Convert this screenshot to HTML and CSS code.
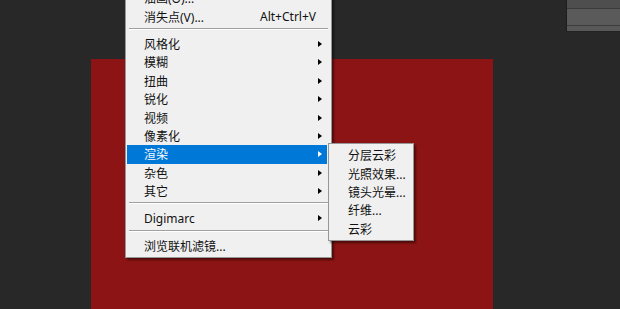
FILE: index.html
```html
<!DOCTYPE html>
<html lang="zh-CN">
<head>
  <meta charset="UTF-8" />
  <title>滤镜菜单</title>
  <link rel="stylesheet" href="styles.css">
</head>
<body>
  <div class="workspace">
    <div class="canvas"></div>

    <div class="panel">
      <div class="panel-top"></div>
      <div class="panel-bar"></div>
      <div class="panel-strip"></div>
    </div>

    <div class="menu main-menu">
      <div class="item"><span class="label">油画(O)...</span></div>
      <div class="item"><span class="label">消失点(V)...</span><span class="shortcut">Alt+Ctrl+V</span></div>
      <div class="sep"></div>
      <div class="item"><span class="label">风格化</span><span class="arrow"></span></div>
      <div class="item"><span class="label">模糊</span><span class="arrow"></span></div>
      <div class="item"><span class="label">扭曲</span><span class="arrow"></span></div>
      <div class="item"><span class="label">锐化</span><span class="arrow"></span></div>
      <div class="item"><span class="label">视频</span><span class="arrow"></span></div>
      <div class="item"><span class="label">像素化</span><span class="arrow"></span></div>
      <div class="item active"><span class="label">渲染</span><span class="arrow"></span></div>
      <div class="item"><span class="label">杂色</span><span class="arrow"></span></div>
      <div class="item"><span class="label">其它</span><span class="arrow"></span></div>
      <div class="sep"></div>
      <div class="item"><span class="label">Digimarc</span><span class="arrow"></span></div>
      <div class="sep"></div>
      <div class="item"><span class="label">浏览联机滤镜...</span></div>
    </div>

    <div class="menu sub-menu">
      <div class="item"><span class="label">分层云彩</span></div>
      <div class="item"><span class="label">光照效果...</span></div>
      <div class="item"><span class="label">镜头光晕...</span></div>
      <div class="item"><span class="label">纤维...</span></div>
      <div class="item"><span class="label">云彩</span></div>
    </div>
  </div>
</body>
</html>
```

FILE: styles.css
```css
body {
  margin: 0;
  background: #282828;
  font-family: "Noto Sans", "Noto Sans CJK SC", sans-serif;
  font-size: 12px;
  color: #111;
  overflow: hidden;
}
.workspace {
  position: relative;
  width: 620px;
  height: 309px;
  overflow: hidden;
}
.canvas {
  position: absolute;
  left: 91px;
  top: 59px;
  width: 402px;
  height: 260px;
  background: #8c1414;
}
.panel {
  position: absolute;
  left: 566px;
  top: 0;
  width: 60px;
  border-left: 1px solid #1e1e1e;
  border-bottom: 1px solid #222;
}
.panel-top {
  height: 8px;
  background: #4e4e4e;
  border-bottom: 1px solid #3a3a3a;
}
.panel-bar {
  height: 16px;
  background: #5a5a5a;
  border-bottom: 1px solid #3d3d3d;
}
.panel-strip {
  height: 5px;
  background: #585858;
}
.menu {
  position: absolute;
  background: #f0f0f0;
  border: 1px solid #979797;
  box-shadow: 2px 2px 2px rgba(0,0,0,0.45);
  padding: 2px 1px;
}
.main-menu {
  left: 125px;
  top: -14px;
  width: 203px;
}
.sub-menu {
  left: 328px;
  top: 143px;
  width: 82px;
}
.item {
  height: 18.4px;
  display: flex;
  align-items: center;
  padding-left: 17px;
  padding-right: 8px;
  white-space: nowrap;
}
.sub-menu .item {
  padding-left: 18px;
}
.item .label {
  flex: 1;
}
.shortcut {
  margin-right: 6px;
}
.arrow {
  width: 0;
  height: 0;
  border-top: 3.5px solid transparent;
  border-bottom: 3.5px solid transparent;
  border-left: 4px solid #000;
}
.item.active {
  background: #0078d7;
  color: #fff;
  margin-right: 3px;
  padding-right: 5px;
}
.item.active .arrow {
  border-left-color: #fff;
}
.sep {
  height: 1px;
  margin: 2px 2px 5px 2px;
  background: #a0a0a0;
  border-bottom: 1px solid #fff;
}
```
